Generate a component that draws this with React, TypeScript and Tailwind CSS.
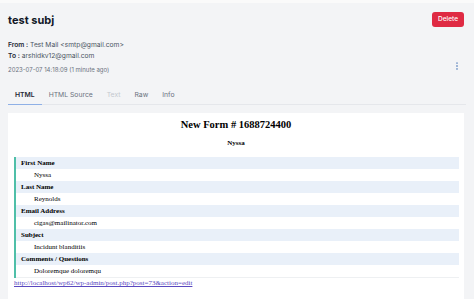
import { MoreVertical } from 'lucide-react';

const fields = [
    { label: 'First Name', value: 'Nyssa' },
    { label: 'Last Name', value: 'Reynolds' },
    { label: 'Email Address', value: 'cigas@mailinator.com' },
    { label: 'Subject', value: 'Incidunt blanditiis' },
    { label: 'Comments / Questions', value: 'Doloremque doloremqu' },
];

const tabs = ['HTML', 'HTML Source', 'Text', 'Raw', 'Info'];

export default function App() {
    return (
        <div className="h-[299px] w-[474px] overflow-hidden bg-[#f3f4f6] font-['Inter',sans-serif] text-[#1f2937]">
            <div className="h-[3px] bg-[#fafafa]" />

            {/* header */}
            <div className="flex items-start justify-between pl-2 pr-[10px] pt-[9px]">
                <h1 className="mt-[1px] text-[11px] font-bold leading-[14px] text-[#111827]">test subj</h1>
                <button className="h-[15px] w-[32px] rounded-[3px] bg-[#df2a43] text-[6.5px] font-medium text-white">
                    Delete
                </button>
            </div>

            <div className="mt-[13px] flex items-start justify-between pl-2 pr-[10px]">
                <div>
                    <div className="text-[6.7px] leading-[11px] text-[#4b5563]">
                        <span className="font-semibold text-[#1f2937]">From :</span> Test Mail &lt;smtp@gmail.com&gt;
                    </div>
                    <div className="text-[6.7px] leading-[11px] text-[#4b5563]">
                        <span className="font-semibold text-[#1f2937]">To :</span> arshidkv12@gmail.com
                    </div>
                    <div className="mt-[3px] text-[6px] leading-[10px] text-[#6b7280]">2023-07-07 14:18:09 (1 minute ago)</div>
                </div>
                <MoreVertical className="mr-[2px] mt-[21px] h-[10px] w-[10px] text-[#7b9bc9]" strokeWidth={2.5} />
            </div>

            {/* tabs */}
            <div className="mx-2 mt-[15px] flex border-b border-[#e5e7eb]">
                {tabs.map((t, i) => (
                    <div
                        key={t}
                        className={`-mb-px px-[7px] pb-[4px] text-[6.8px] leading-[10px] ${
                            i === 0
                                ? 'border-b border-[#8fb0e6] font-semibold text-[#1f2937]'
                                : i === 2
                                  ? 'border-b border-transparent text-[#c4c8cf]'
                                  : 'border-b border-transparent text-[#6b7280]'
                        }`}
                    >
                        {t}
                    </div>
                ))}
            </div>

            {/* html body */}
            <div className="ml-2 mr-[10px] mt-[8px] h-[200px] bg-white pt-[6px] font-['Liberation_Serif',serif] text-black">
                <h2 className="text-center text-[10.5px] font-bold leading-[12px]">New Form # 1688724400</h2>
                <p className="mt-[7px] text-center text-[7px] font-bold leading-[10px]">Nyssa</p>

                <div className="ml-[6px] mr-[5px] mt-[9px] border-l-2 border-[#4fbfa8]">
                    {fields.map((f) => (
                        <div key={f.label}>
                            <div className="flex h-[12px] items-center bg-[#e9f0f9] pl-[5px] text-[7px] font-bold">{f.label}</div>
                            <div className="flex h-[12px] items-center pl-[18px] text-[7px]">{f.value}</div>
                        </div>
                    ))}
                    <div className="h-px bg-[#eef0f2]" />
                </div>

                <a
                    href="#"
                    className="ml-[6px] block text-[7px] leading-[10px] text-[#5a48bf] underline"
                >
                    http://localhost/wp62/wp-admin/post.php?post=73&amp;action=edit
                </a>
            </div>
        </div>
    );
}
